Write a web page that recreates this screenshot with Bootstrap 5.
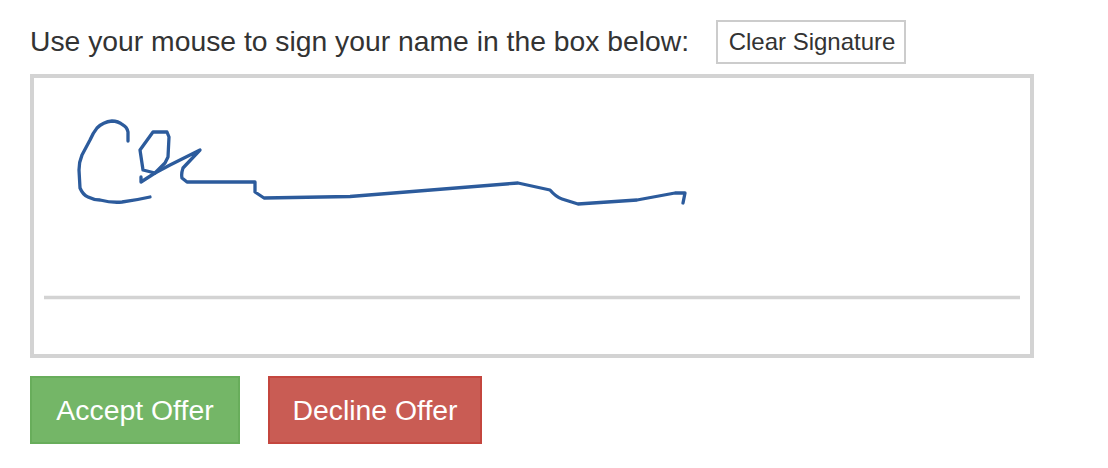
<!DOCTYPE html>
<html lang="en">
<head>
<meta charset="utf-8">
<title>Sign offer</title>
<link rel="stylesheet" href="https://cdn.jsdelivr.net/npm/bootstrap@5.3.0/dist/css/bootstrap.min.css">
<style>
body { font-family: "Liberation Sans", Arial, sans-serif; color: #333; background: #fff; }
.sheet { padding: 20px 0 0 30px; width: 1064px; }
.sign-head { height: 44px; margin-bottom: 10px; }
.sign-label { font-size: 28.3px; margin-right: 27px; line-height: 42px; padding-bottom: 2px; white-space: nowrap; }
.btn-clear { font-size: 24px; line-height: 26px; height: 44px; width: 190px; padding: 7px 0 7px 2px; border: 2px solid #ccc; border-radius: 0; color: #333; background: #fff; white-space: nowrap; }
.sign-box { width: 1004px; height: 284px; border: 4px solid #d3d3d3; background: #fff; margin-bottom: 18px; }
.sign-svg { display: block; width: 1004px; height: 284px; margin: -4px; }
.sign-ink { filter: blur(0.4px); }
.btn-offer { font-size: 28.4px; line-height: 30px; height: 68px; padding: 17px 0; border-width: 2px; border-style: solid; border-radius: 0; color: #fff; white-space: nowrap; }
.btn-accept { width: 210px; background: #74b667; border-color: #68ad5b; margin-right: 28px; }
.btn-decline { width: 214px; background: #c95c54; border-color: #c4463e; }
</style>
</head>
<body>
<div class="sheet">
  <div class="sign-head d-flex align-items-center">
    <span class="sign-label">Use your mouse to sign your name in the box below:</span>
    <button type="button" class="btn btn-clear">Clear Signature</button>
  </div>
  <div class="sign-box">
    <svg class="sign-svg" viewBox="30 74 1004 284" fill="none" aria-label="Signature">
      <line x1="44" y1="297.500" x2="1020" y2="297.500" stroke="#d3d3d3" stroke-width="3.500"/>
      <g class="sign-ink" stroke="#2c5b9c" stroke-width="3.300" stroke-linejoin="round" stroke-linecap="round">
        <path d="M128 141L128 132Q127 127 123 125Q118 121 112 121Q103 122 97 128Q93 133 90 140L82 155Q79 162 79 170L80 188Q83 195 88 197Q94 200 100 200Q112 203 122 202Q137 200 150 197"/>
        <path d="M141 177L141 182L155 173L170 165L200 150L183 168Q181 174 182 178L187 182L255 182L255 192L264 198L350 196.500L518 183L550 190Q556 197 562 199L578 204L637 200L675 193L685 193L683 203"/>
        <path d="M155 173L143 170L140 150L153 132L167 132L169 137L168 157L165 163L155 173"/>
      </g>
    </svg>
  </div>
  <div class="d-flex offer-row">
    <button type="button" class="btn btn-offer btn-accept">Accept Offer</button>
    <button type="button" class="btn btn-offer btn-decline">Decline Offer</button>
  </div>
</div>
<script src="https://cdn.jsdelivr.net/npm/bootstrap@5.3.0/dist/js/bootstrap.bundle.min.js"></script>
</body>
</html>
